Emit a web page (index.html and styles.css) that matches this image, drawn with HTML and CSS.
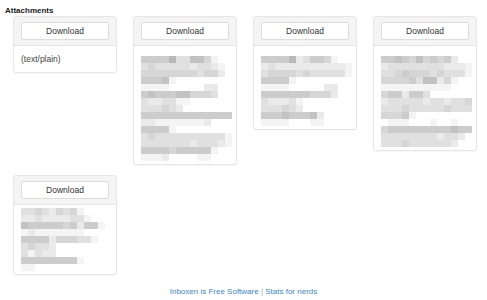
FILE: index.html
```html
<!DOCTYPE html>
<html>
<head>
  <title>Attachments</title>
  <link rel="stylesheet" href="styles.css">
</head>
<body>
  <h3 class="section-title">Attachments</h3>

  <div class="attachment-list">
    <div class="attachment">
      <div class="attachment-head">
        <button class="download-button">Download</button>
      </div>
      <div class="attachment-body">(text/plain)</div>
    </div>

    <div class="attachment">
      <div class="attachment-head">
        <button class="download-button">Download</button>
      </div>
      <div class="attachment-body preview">
        <div class="thumb" data-px="0000000000000,5555733664100,3433333233210,4444444434420,5556100000000,1111000002200,5655566444300,3223311000000,3334320000000,5555555555555,2211111112000,5555100000000,3433333333331,3333333233321,5555455555100,1112000011000"></div>
      </div>
    </div>

    <div class="attachment">
      <div class="attachment-head">
        <button class="download-button">Download</button>
      </div>
      <div class="attachment-body preview">
        <div class="thumb" data-px="0000000000000,5555723554100,2322222222221,3444434333331,5555100000000,1111000002200,5555555444200,3222310000000,3334320000000,5556555620000,1111000110000"></div>
      </div>
    </div>

    <div class="attachment">
      <div class="attachment-head">
        <button class="download-button">Download</button>
      </div>
      <div class="attachment-body preview">
        <div class="thumb" data-px="0000000000000,5565464545200,2333333332221,3345444343331,4444536624100,1111111111000,4552553000000,2333332332334,3334333334333,4445100000000,0111000100100,4555555555655,3333333323320,3334333333200"></div>
      </div>
    </div>

    <div class="attachment">
      <div class="attachment-head">
        <button class="download-button">Download</button>
      </div>
      <div class="attachment-body preview">
        <div class="thumb" data-px="3343243410000,2232222331000,6555554525510,1211111110000,5555244433100,3433200000000,3132200000000,5555555510000,1100000000000"></div>
      </div>
    </div>
  </div>

  <div class="footer">
    <a href="#">Inboxen is Free Software</a> <span class="sep">|</span> <a href="#">Stats for nerds</a>
  </div>

  <script src="thumbs.js"></script>
</body>
</html>
```

FILE: styles.css
```css
body {
  margin: 0;
  padding: 5px 5px 0 5px;
  font-family: "Liberation Sans", Arial, sans-serif;
  font-size: 8px;
  color: #333;
  background: #fff;
}

.section-title {
  margin: 0;
  font-size: 8px;
  line-height: 11px;
  font-weight: bold;
  color: #222;
}

.attachment-list {
  display: flex;
  flex-wrap: wrap;
  align-items: flex-start;
  column-gap: 16px;
  row-gap: 10px;
  padding-left: 8px;
}

.attachment {
  width: 104px;
  box-sizing: border-box;
  border: 1px solid #e6e6e6;
  border-radius: 3px;
  background: #fff;
  box-shadow: 0 1px 1px rgba(0, 0, 0, 0.03);
}

.attachment-head {
  background: #f4f4f4;
  border-bottom: 1px solid #e6e6e6;
  padding: 5px 7px;
}

.download-button {
  display: block;
  width: 100%;
  height: 18px;
  margin: 0;
  padding: 0;
  border: 1px solid #dcdcdc;
  border-radius: 2px;
  background: #fff;
  font-family: "Liberation Sans", Arial, sans-serif;
  font-size: 8.5px;
  color: #333;
}

.attachment-body {
  padding: 7px;
  font-size: 8.5px;
  line-height: 12px;
  color: #444;
}

.attachment-body.preview {
  padding: 3px 7px 3px 7px;
}

.thumb {
  display: grid;
  grid-template-columns: repeat(13, 7px);
  grid-auto-rows: 7px;
}

.footer {
  margin-top: 11px;
  text-align: center;
  line-height: 12px;
  font-size: 8px;
}

.footer a {
  color: #3d87c9;
  text-decoration: none;
}

.footer .sep {
  color: #9aa6b4;
}
```

FILE: thumbs.js
```js
// shades for the blurred preview images, 0 = white
const shades = ['#ffffff', '#f4f4f4', '#eaeaea', '#e0e0e0', '#d6d6d6', '#cccccc', '#c2c2c2', '#b8b8b8'];

document.querySelectorAll('.thumb').forEach(thumb => {
  thumb.dataset.px.split(',').forEach(row => {
    for (const ch of row) {
      let cell = document.createElement('div');
      cell.style.background = shades[Number(ch)];
      thumb.appendChild(cell);
    }
  });
});
```
